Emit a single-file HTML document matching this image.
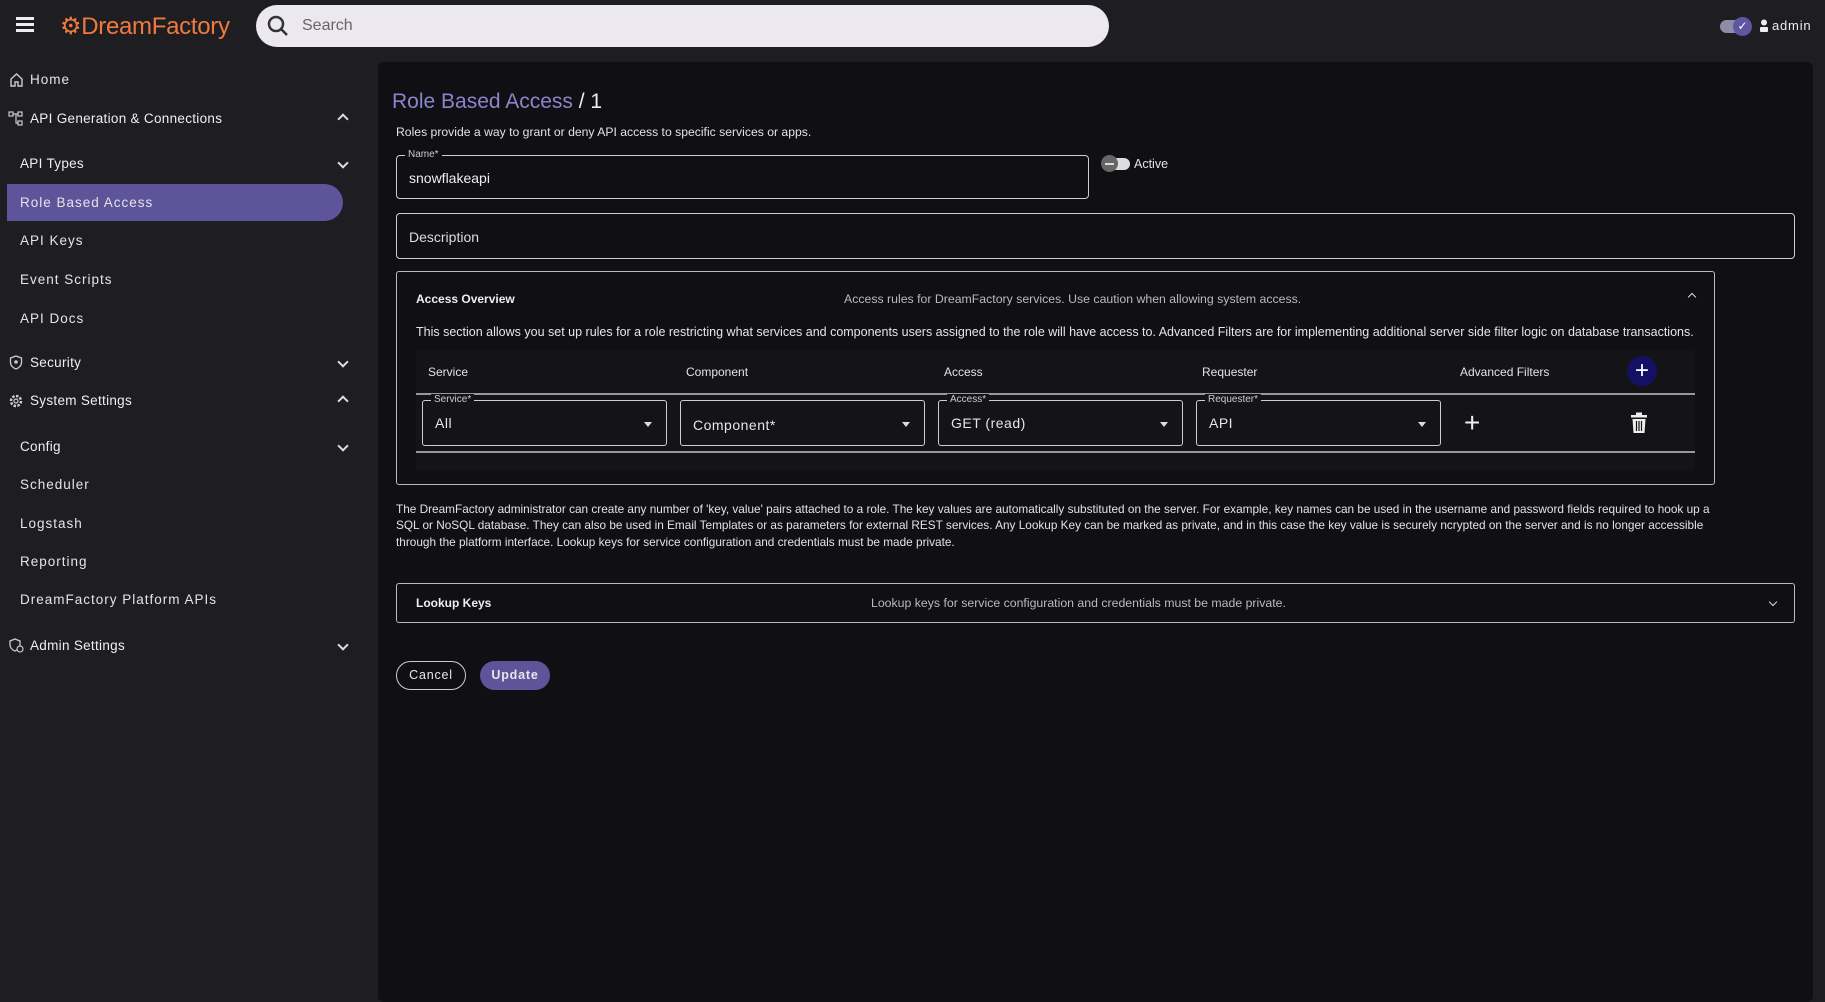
<!DOCTYPE html>
<html><head><meta charset="utf-8"><style>
*{box-sizing:border-box;margin:0;padding:0}
body{width:1825px;height:993px;background:#1e1d22;font-family:"Liberation Sans",sans-serif;color:#e8e6ec;position:relative;overflow:hidden}
.a{position:absolute}
.nav{font-size:14px;letter-spacing:1px;color:#e6e4ea}
.navb{font-size:13.5px;color:#f0eef4;letter-spacing:.3px}
.chev{position:absolute;left:339px;width:8px;height:8px;border-right:2px solid #ddd;border-bottom:2px solid #ddd}
.dn{transform:rotate(45deg)}
.up{transform:rotate(-135deg)}
.field{position:absolute;border:1px solid #cfcdd3;border-radius:4px}
.lab{position:absolute;top:-7px;left:8px;background:#100f14;padding:0 3px;font-size:10px;color:#ccc;line-height:12px}
.sel{position:absolute;border:1px solid #cfcdd3;border-radius:3px;height:46px;top:400px;width:245px}
.sel .v{position:absolute;left:12px;top:14px;font-size:14px;color:#e6e6e6;letter-spacing:.5px}
.sel .tri{position:absolute;right:14px;top:21px;border-left:4px solid transparent;border-right:4px solid transparent;border-top:5px solid #ddd}
.sel .lab{background:#141318}
.sm{font-size:12px;color:#e4e2e8}
</style></head><body>
<div class="a" style="left:16px;top:17px;width:18px;height:2.5px;background:#eee;box-shadow:0 6px 0 #eee,0 12px 0 #eee"></div>
<div class="a" style="left:60px;top:12px;font-size:24px;color:#ee7a3e;letter-spacing:-.3px">⚙DreamFactory</div>
<div class="a" style="left:256px;top:5px;width:853px;height:42px;background:#ece8ef;border-radius:21px"></div>
<svg class="a" style="left:266px;top:14px" width="24" height="24" viewBox="0 0 24 24"><circle cx="10" cy="10" r="7" stroke="#333" stroke-width="2.5" fill="none"/><path d="M15 15l6 6" stroke="#333" stroke-width="2.5"/></svg>
<div class="a" style="left:302px;top:17px;font-size:16px;color:#666">Search</div>
<div class="a" style="left:1720px;top:20px;width:28px;height:13px;border-radius:7px;background:#8f8ca8"></div>
<div class="a" style="left:1733px;top:17px;width:19px;height:19px;border-radius:50%;background:#5e56a0;color:#fff;font-size:12px;text-align:center;line-height:19px">✓</div>
<svg class="a" style="left:1759px;top:19px" width="10" height="13" viewBox="0 0 10 13"><circle cx="5" cy="3.5" r="3" fill="#eee"/><rect x="1" y="8" width="8" height="5" rx="1" fill="#eee"/></svg>
<div class="a" style="left:1772px;top:18px;font-size:13px;color:#eee;letter-spacing:.8px">admin</div>

<svg class="a" style="left:9px;top:72px" width="15" height="15" viewBox="0 0 15 15"><path d="M2 7L7.5 2L13 7V14H9V10H6V14H2Z" fill="none" stroke="#ccc" stroke-width="1.4"/></svg>
<div class="a nav" style="left:30px;top:72px;font-size:13.5px">Home</div>
<svg class="a" style="left:8px;top:111px" width="16" height="16" viewBox="0 0 16 16" fill="none" stroke="#ccc" stroke-width="1.2"><rect x="1" y="1" width="4" height="4"/><rect x="10" y="1" width="4" height="4"/><rect x="10" y="10" width="4" height="4"/><path d="M5 3h5M8 3v9h2"/></svg>
<div class="a navb" style="left:30px;top:111px">API Generation &amp; Connections</div>
<div class="chev up" style="top:115px"></div>
<div class="a navb" style="left:20px;top:156px">API Types</div>
<div class="chev dn" style="top:159px"></div>
<div class="a" style="left:7px;top:184px;width:336px;height:37px;background:#5e5499;border-radius:0 19px 19px 0"></div>
<div class="a nav" style="left:20px;top:195px;font-size:13.5px">Role Based Access</div>
<div class="a nav" style="left:20px;top:233px;font-size:13.5px">API Keys</div>
<div class="a nav" style="left:20px;top:272px;font-size:13.5px">Event Scripts</div>
<div class="a nav" style="left:20px;top:311px;font-size:13.5px">API Docs</div>
<svg class="a" style="left:9px;top:355px" width="14" height="15" viewBox="0 0 14 15"><path d="M7 1L12.5 3V7.5C12.5 10.5 10 13 7 14C4 13 1.5 10.5 1.5 7.5V3Z" fill="none" stroke="#ccc" stroke-width="1.3"/><circle cx="7" cy="7" r="1.8" fill="#ccc"/></svg>
<div class="a navb" style="left:30px;top:355px">Security</div>
<div class="chev dn" style="top:358px"></div>
<svg class="a" style="left:8px;top:393px" width="16" height="16" viewBox="0 0 16 16"><circle cx="8" cy="8" r="5" fill="none" stroke="#ccc" stroke-width="2.5" stroke-dasharray="2.5 1.4"/><circle cx="8" cy="8" r="2" fill="none" stroke="#ccc" stroke-width="1.2"/></svg>
<div class="a navb" style="left:30px;top:393px">System Settings</div>
<div class="chev up" style="top:397px"></div>
<div class="a navb" style="left:20px;top:439px">Config</div>
<div class="chev dn" style="top:442px"></div>
<div class="a nav" style="left:20px;top:477px;font-size:13.5px">Scheduler</div>
<div class="a nav" style="left:20px;top:516px;font-size:13.5px">Logstash</div>
<div class="a nav" style="left:20px;top:554px;font-size:13.5px">Reporting</div>
<div class="a nav" style="left:20px;top:592px;font-size:13.5px">DreamFactory Platform APIs</div>
<svg class="a" style="left:9px;top:638px" width="15" height="15" viewBox="0 0 15 15"><path d="M6 1L11 3V6.5C11 9.5 9 12 6 13C3 12 1 9.5 1 6.5V3Z" fill="none" stroke="#ccc" stroke-width="1.3"/><circle cx="11" cy="11" r="3" fill="#1e1d22" stroke="#ccc" stroke-width="1.2"/></svg>
<div class="a navb" style="left:30px;top:638px">Admin Settings</div>
<div class="chev dn" style="top:641px"></div>

<div class="a" style="left:378px;top:62px;width:1435px;height:940px;background:#100f14;border-radius:6px"></div>
<div class="a" style="left:392px;top:90px;font-size:21px;color:#8b85c9">Role Based Access <span style="color:#eee">/ 1</span></div>
<div class="a sm" style="left:396px;top:125px;font-size:12.2px">Roles provide a way to grant or deny API access to specific services or apps.</div>
<div class="field" style="left:396px;top:155px;width:693px;height:44px"><span class="lab">Name*</span><div class="a" style="left:12px;top:14px;font-size:14px;color:#eee">snowflakeapi</div></div>
<div class="a" style="left:1102px;top:158px;width:28px;height:12px;border-radius:6px;background:#ddd"></div>
<div class="a" style="left:1101px;top:155px;width:17px;height:17px;border-radius:50%;background:#666"><div style="margin:7.5px 4px;height:2px;background:#ddd"></div></div>
<div class="a sm" style="left:1134px;top:157px;font-size:12.5px">Active</div>
<div class="field" style="left:396px;top:213px;width:1399px;height:46px"><div class="a" style="left:12px;top:15px;font-size:14px;color:#ddd">Description</div></div>

<div class="a" style="left:396px;top:271px;width:1319px;height:214px;border:1px solid #bbb;border-radius:3px"></div>
<div class="a" style="left:416px;top:292px;font-size:12px;font-weight:bold;color:#eee">Access Overview</div>
<div class="a" style="left:844px;top:292px;font-size:12.3px;color:#bbb">Access rules for DreamFactory services. Use caution when allowing system access.</div>
<div class="a up" style="left:1689px;top:294px;width:6px;height:6px;border-right:1.5px solid #ddd;border-bottom:1.5px solid #ddd"></div>
<div class="a" style="left:416px;top:325px;font-size:12.5px;color:#e6e6e6;white-space:nowrap">This section allows you set up rules for a role restricting what services and components users assigned to the role will have access to. Advanced Filters are for implementing additional server side filter logic on database transactions.</div>
<div class="a" style="left:416px;top:349px;width:1279px;height:122px;background:#141318"></div>
<div class="a" style="left:416px;top:393px;width:1279px;height:1.5px;background:#999"></div>
<div class="a" style="left:416px;top:451px;width:1279px;height:1.5px;background:#999"></div>
<div class="a sm" style="left:428px;top:365px">Service</div>
<div class="a sm" style="left:686px;top:365px">Component</div>
<div class="a sm" style="left:944px;top:365px">Access</div>
<div class="a sm" style="left:1202px;top:365px">Requester</div>
<div class="a sm" style="left:1460px;top:365px">Advanced Filters</div>
<div class="a" style="left:1627px;top:356px;width:30px;height:30px;border-radius:50%;background:#141164;color:#fff;font-size:24px;text-align:center;line-height:29px">+</div>
<div class="sel" style="left:422px"><span class="lab">Service*</span><span class="v">All</span><span class="tri"></span></div>
<div class="sel" style="left:680px"><span class="v" style="top:16px">Component*</span><span class="tri"></span></div>
<div class="sel" style="left:938px"><span class="lab">Access*</span><span class="v">GET (read)</span><span class="tri"></span></div>
<div class="sel" style="left:1196px"><span class="lab">Requester*</span><span class="v">API</span><span class="tri"></span></div>
<div class="a" style="left:1464px;top:409px;font-size:28px;color:#eee;line-height:28px">+</div>
<svg class="a" style="left:1630px;top:412px" width="18" height="22" viewBox="0 0 18 22"><rect x="1" y="3" width="16" height="2.5" fill="#eee"/><rect x="6" y="0.5" width="6" height="3" fill="#eee"/><path d="M2.5 7H15.5L14.5 21H3.5Z" fill="#eee"/><path d="M6.5 9v10M9 9v10M11.5 9v10" stroke="#141318" stroke-width="1.2"/></svg>

<div class="a sm" style="left:396px;top:501px;white-space:nowrap;line-height:16.3px;font-size:11.8px">The DreamFactory administrator can create any number of 'key, value' pairs attached to a role. The key values are automatically substituted on the server. For example, key names can be used in the username and password fields required to hook up a<br>SQL or NoSQL database. They can also be used in Email Templates or as parameters for external REST services. Any Lookup Key can be marked as private, and in this case the key value is securely ncrypted on the server and is no longer accessible<br>through the platform interface. Lookup keys for service configuration and credentials must be made private.</div>

<div class="a" style="left:396px;top:583px;width:1399px;height:40px;border:1px solid #bbb;border-radius:3px"></div>
<div class="a" style="left:416px;top:596px;font-size:12px;font-weight:bold;color:#eee">Lookup Keys</div>
<div class="a" style="left:871px;top:596px;font-size:12.3px;color:#bbb">Lookup keys for service configuration and credentials must be made private.</div>
<div class="a dn" style="left:1770px;top:599px;width:6px;height:6px;border-right:1.5px solid #ddd;border-bottom:1.5px solid #ddd"></div>

<div class="a" style="left:396px;top:661px;width:70px;height:29px;border:1px solid #ccc;border-radius:15px;font-size:12.5px;text-align:center;line-height:27px;letter-spacing:.8px">Cancel</div>
<div class="a" style="left:480px;top:661px;width:70px;height:29px;background:#5e5499;border-radius:15px;font-size:12.5px;text-align:center;line-height:29px;letter-spacing:.8px;font-weight:bold">Update</div>
</body></html>
